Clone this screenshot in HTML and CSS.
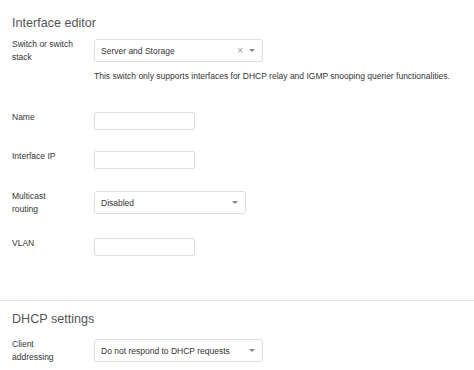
FILE: index.html
```html
<!DOCTYPE html>
<html lang="en">
<head>
	<meta charset="UTF-8">
	<title>Interface editor</title>
	<link rel="stylesheet" href="styles.css">
</head>
<body>
	<!-- interface editor -->
	<section class="panel">
		<h2 class="title">Interface editor</h2>
		<div class="row row-switch">
			<label>Switch or switch<br>stack</label>
			<div class="field">
				<div class="select wide">
					<span class="value">Server and Storage</span>
					<span class="clear">&times;</span>
					<span class="caret"></span>
				</div>
				<p class="help">This switch only supports interfaces for DHCP relay and IGMP snooping querier functionalities.</p>
			</div>
		</div>
		<div class="row row-name">
			<label>Name</label>
			<div class="field"><input type="text" class="text"></div>
		</div>
		<div class="row row-ip">
			<label>Interface IP</label>
			<div class="field"><input type="text" class="text"></div>
		</div>
		<div class="row row-multicast">
			<label>Multicast<br>routing</label>
			<div class="field">
				<div class="select mid">
					<span class="value">Disabled</span>
					<span class="caret"></span>
				</div>
			</div>
		</div>
		<div class="row row-vlan">
			<label>VLAN</label>
			<div class="field"><input type="text" class="text"></div>
		</div>
	</section>
	<hr class="divider">
	<!-- dhcp -->
	<section class="panel panel-dhcp">
		<h2 class="title">DHCP settings</h2>
		<div class="row row-client">
			<label>Client<br>addressing</label>
			<div class="field">
				<div class="select wide">
					<span class="value">Do not respond to DHCP requests</span>
					<span class="caret"></span>
				</div>
			</div>
		</div>
	</section>
</body>
</html>
```

FILE: styles.css
```css
*{
	margin:0;
	padding:0;
	box-sizing:border-box;
}
body{
	font-family:"Liberation Sans", Arial, sans-serif;
	color:#333;
	background:#fff;
}
.panel{
	padding:15px 0 0 12px;
}
.title{
	font-size:12.6px;
	font-weight:normal;
	line-height:16px;
	color:#555;
}
.row{
	display:grid;
	grid-template-columns:82px auto;
	align-items:start;
}
.row label{
	font-size:8.5px;
	line-height:13px;
	margin-top:-1px;
	padding-right:10px;
	color:#333;
}
.row-switch{ margin-top:8px; }
.row-name{ margin-top:30px; }
.row-ip{ margin-top:21px; }
.row-multicast{ margin-top:22px; }
.row-vlan{ margin-top:22px; }
.select{
	display:flex;
	align-items:center;
	height:23px;
	border:1px solid #ddd;
	border-radius:3px;
	padding:0 6px 0 6px;
	font-size:8.5px;
	color:#333;
	background:#fff;
}
.select.wide{ width:169px; }
.select.mid{ width:152px; }
.select .value{
	flex:1;
}
.select .clear{
	color:#999;
	font-size:10px;
	margin-right:6px;
}
.select .caret{
	width:0;
	height:0;
	border-left:3px solid transparent;
	border-right:3px solid transparent;
	border-top:3px solid #888;
	margin-right:1px;
}
.help{
	font-size:8.5px;
	line-height:12px;
	margin-top:8px;
	color:#333;
	white-space:nowrap;
}
.text{
	display:block;
	width:101px;
	height:18px;
	border:1px solid #ddd;
	border-radius:2px;
	background:#fff;
}
.divider{
	border:none;
	border-top:1px solid #e6e6e6;
	margin-top:44px;
}
.panel-dhcp{
	padding-top:10px;
}
.row-client{ margin-top:12px; }
```
